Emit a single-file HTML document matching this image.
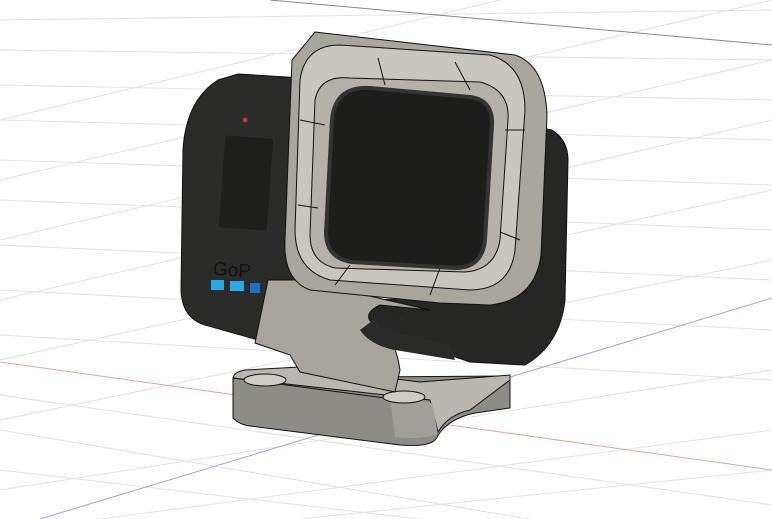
<!DOCTYPE html>
<html><head><meta charset="utf-8"><style>html,body{margin:0;padding:0;background:#fff;overflow:hidden;width:772px;height:519px}svg{display:block}</style></head><body>
<svg width="772" height="519" viewBox="0 0 772 519" xmlns="http://www.w3.org/2000/svg">
<rect width="772" height="519" fill="#fff"/>
<g stroke="#e3e3e3" stroke-width="1">
<line x1="0" y1="20" x2="772" y2="10"/><line x1="0" y1="50" x2="772" y2="60"/><line x1="0" y1="85" x2="772" y2="100"/>
<line x1="0" y1="120" x2="772" y2="140"/><line x1="0" y1="160" x2="772" y2="185"/><line x1="0" y1="200" x2="772" y2="230"/>
<line x1="0" y1="245" x2="772" y2="280"/><line x1="0" y1="290" x2="772" y2="330"/><line x1="0" y1="335" x2="772" y2="380"/>
<line x1="0" y1="395" x2="772" y2="505"/><line x1="0" y1="430" x2="772" y2="560"/><line x1="0" y1="470" x2="600" y2="540"/>
<line x1="0" y1="240" x2="772" y2="60"/><line x1="0" y1="300" x2="772" y2="120"/><line x1="0" y1="360" x2="772" y2="190"/>
<line x1="0" y1="420" x2="772" y2="260"/><line x1="0" y1="490" x2="772" y2="370"/><line x1="100" y1="519" x2="772" y2="430"/>
<line x1="0" y1="180" x2="772" y2="0"/><line x1="0" y1="120" x2="500" y2="0"/><line x1="300" y1="519" x2="772" y2="470"/>
</g>
<line x1="270" y1="0" x2="772" y2="45" stroke="#888" stroke-width="1"/>
<line x1="0" y1="362" x2="772" y2="470" stroke="#f0a0a0" stroke-width="1"/>
<line x1="40" y1="519" x2="772" y2="298" stroke="#a0a0f0" stroke-width="1"/>
<!-- camera left -->
<path d="M238 74 L302 78 L292 330 L258 340 L205 325 Q182 318 181 290 L183 150 Q186 100 218 80 Z" fill="#2b2b29" stroke="#111" stroke-width="1"/>
<rect x="222" y="137" width="48" height="92" rx="3" fill="#1e1e1d" transform="rotate(4 246 183)"/>
<circle cx="245" cy="120" r="2.5" fill="#c33"/>
<text x="213" y="276" font-family="Liberation Sans, sans-serif" font-size="19" fill="#111" transform="rotate(4 230 270)">GoP</text>
<rect x="211" y="280" width="13" height="10" fill="#2aa8e8"/><rect x="230" y="281" width="14" height="10" fill="#2aa8e8"/><rect x="250" y="283" width="10" height="10" fill="#1f6fbf"/>
<!-- camera right -->
<path d="M525 125 L552 130 Q568 140 568 160 L565 300 Q560 345 525 365 L470 362 L420 345 L360 330 L370 300 L520 295 Z" fill="#262624" stroke="#111" stroke-width="1"/>
<path d="M505 240 L530 245 L527 295 L505 290 Z" fill="#1d1d1c"/>
<!-- base -->
<path d="M233 378 L233 418 Q240 425 250 426 L400 445 Q435 448 438 435 Q450 418 475 413 L510 408 L510 376 Z" fill="#8e8c86" stroke="#111" stroke-width="1"/>
<path d="M233 378 Q234 372 245 370 L300 367 L420 382 L510 375 L510 380 L470 410 Q448 415 438 432 L430 400 Z" fill="#b9b7b0" stroke="#111" stroke-width="1"/>
<path d="M233 378 L430 404 L438 432" fill="none" stroke="#111"/>
<path d="M390 397 L432 403 L438 434 Q420 440 395 437 Z" fill="#a19f99"/>
<ellipse cx="265" cy="380" rx="21" ry="6" fill="#cfccc4" stroke="#111"/>
<ellipse cx="404" cy="397" rx="21" ry="6" fill="#cfccc4" stroke="#111"/>
<!-- stem -->
<path d="M268 280 L255 343 L290 355 L300 372 L395 392 L400 370 Q395 335 375 325 Q360 315 380 305 L430 310 L300 280 Z" fill="#a8a59d" stroke="#111" stroke-width="1"/>
<path d="M360 330 Q370 345 395 350 L455 360 L450 345 L385 330 Q372 325 380 315 Z" fill="#2a2a28"/>
<circle cx="392" cy="311" r="2" fill="#222"/><circle cx="397" cy="312" r="2" fill="#222"/><circle cx="402" cy="313" r="2" fill="#222"/>
<!-- mount front -->
<path d="M315 32 L515 55 Q545 65 547 115 L541 255 Q535 300 490 305 L440 303 L310 290 Q283 280 285 240 L292 60 Z" fill="#a9a69e" stroke="#111" stroke-width="1"/>
<path d="M340 45 L490 55 Q525 65 525 110 L515 250 Q510 290 470 290 L330 280 Q295 270 295 230 L300 80 Q305 45 340 45 Z" fill="#c9c6be" stroke="#111" stroke-width="1"/>
<path d="M350 78 L480 82 Q510 90 508 120 L500 240 Q495 270 465 272 L335 268 Q310 262 310 235 L315 100 Q320 75 350 78 Z" fill="#b4b1a9" stroke="#111" stroke-width="1"/>
<path d="M378 58 L385 85 M455 62 L470 90 M300 120 L325 125 M505 130 L525 130 M298 205 L318 208 M500 232 L520 240 M350 265 L335 285 M440 268 L430 295" stroke="#111" stroke-width="1"/>
<path d="M370 88 L470 97 Q493 100 492 125 L485 240 Q482 268 455 268 L352 262 Q326 258 326 232 L332 120 Q335 86 370 88 Z" fill="#1d1d1b" stroke="#333" stroke-width="4"/>
</svg>
</body></html>
